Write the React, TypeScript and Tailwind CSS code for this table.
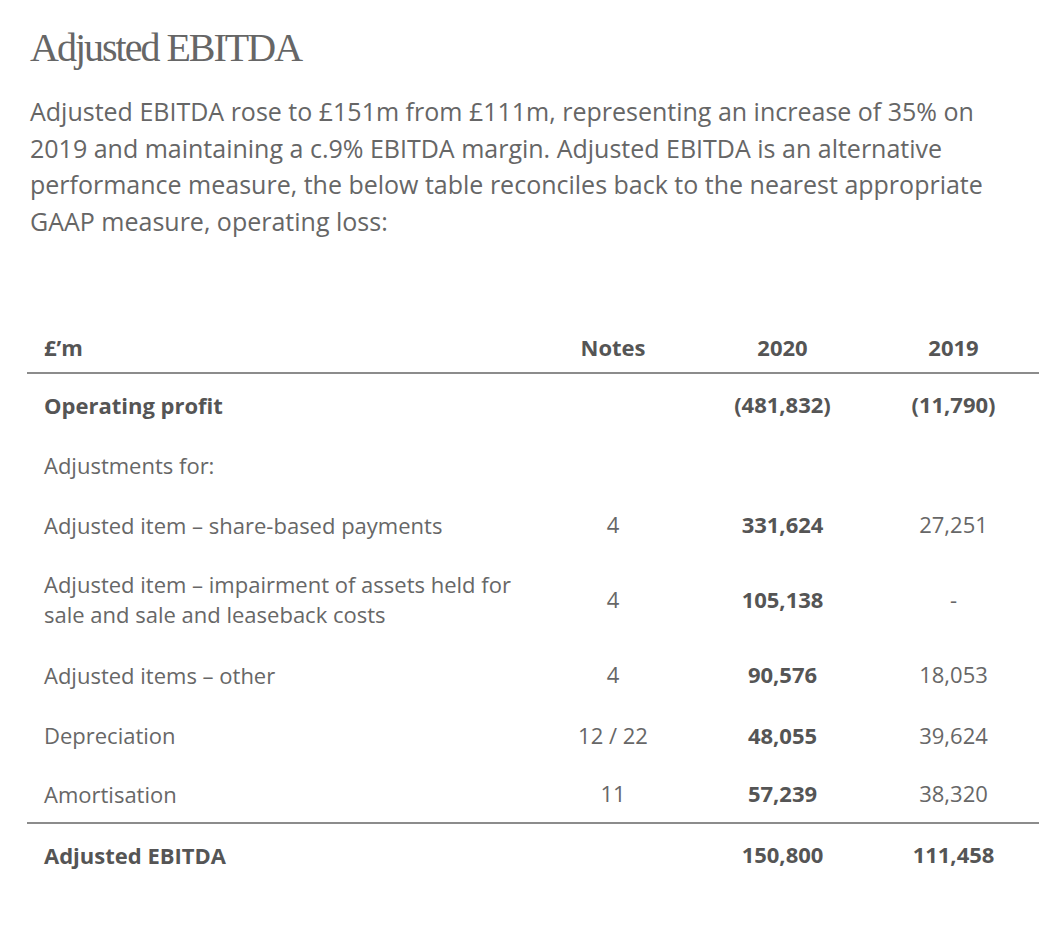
const body = "font-['Open_Sans','Lato',sans-serif]"

type Row = {
  label: string[]
  notes: string
  y20: string
  y19: string
  strong?: boolean
  h: string
}

const rows: Row[] = [
  { label: ["Operating profit"], notes: "", y20: "(481,832)", y19: "(11,790)", strong: true, h: "h-[62px]" },
  { label: ["Adjustments for:"], notes: "", y20: "", y19: "", h: "h-[60px]" },
  { label: ["Adjusted item – share-based payments"], notes: "4", y20: "331,624", y19: "27,251", h: "h-[59px]" },
  {
    label: ["Adjusted item – impairment of assets held for", "sale and sale and leaseback costs"],
    notes: "4",
    y20: "105,138",
    y19: "-",
    h: "h-[90px]",
  },
  { label: ["Adjusted items – other"], notes: "4", y20: "90,576", y19: "18,053", h: "h-[61px]" },
  { label: ["Depreciation"], notes: "12 / 22", y20: "48,055", y19: "39,624", h: "h-[60px]" },
  { label: ["Amortisation"], notes: "11", y20: "57,239", y19: "38,320", h: "h-[58px]" },
]

const regular = "font-normal text-[#676767]"
const strong = "font-bold text-[#555555]"

function Cells({ row }: { row: Row }) {
  return (
    <>
      <td className={`pl-[17px] leading-[30px] ${row.strong ? strong : regular}`}>
        {row.label.map((l, i) => (
          <div key={i}>{l}</div>
        ))}
      </td>
      <td className={`text-center ${regular}`}>{row.notes}</td>
      <td className={`text-center ${strong}`}>{row.y20}</td>
      <td className={`text-center ${row.strong ? strong : regular}`}>{row.y19}</td>
    </>
  )
}

export default function App() {
  return (
    <div className="min-h-screen bg-white pl-[27px] pr-[18px] pt-[24px] text-[#5b5b5b]">
      <h1 className="pl-[3px] font-['Liberation_Serif','Times_New_Roman',serif] text-[40px] leading-[48px] tracking-[-0.05em] text-[#666666]">
        Adjusted EBITDA
      </h1>

      <p className={`${body} mt-[21px] pl-[3px] text-[25px] font-normal leading-[36.5px] text-[#666666]`}>
        Adjusted EBITDA rose to £151m from £111m, representing an increase of 35% on
        <br />
        2019 and maintaining a c.9% EBITDA margin. Adjusted EBITDA is an alternative
        <br />
        performance measure, the below table reconciles back to the nearest appropriate
        <br />
        GAAP measure, operating loss:
      </p>

      <table className={`${body} mt-[83px] w-[1012px] table-fixed border-collapse text-[22px]`}>
        <colgroup>
          <col className="w-[502px]" />
          <col className="w-[168px]" />
          <col className="w-[171px]" />
          <col className="w-[171px]" />
        </colgroup>
        <thead>
          <tr className="h-[51px] border-b-2 border-[#8c8c8c] font-bold text-[#555555]">
            <th className="pl-[17px] text-left">£’m</th>
            <th className="text-center">Notes</th>
            <th className="text-center">2020</th>
            <th className="text-center">2019</th>
          </tr>
        </thead>
        <tbody>
          {rows.map((row, i) => (
            <tr key={i} className={`${row.h} ${i === rows.length - 1 ? "border-b-2 border-[#8c8c8c]" : ""}`}>
              <Cells row={row} />
            </tr>
          ))}
          <tr className="h-[62px]">
            <Cells
              row={{ label: ["Adjusted EBITDA"], notes: "", y20: "150,800", y19: "111,458", strong: true, h: "" }}
            />
          </tr>
        </tbody>
      </table>
    </div>
  )
}
